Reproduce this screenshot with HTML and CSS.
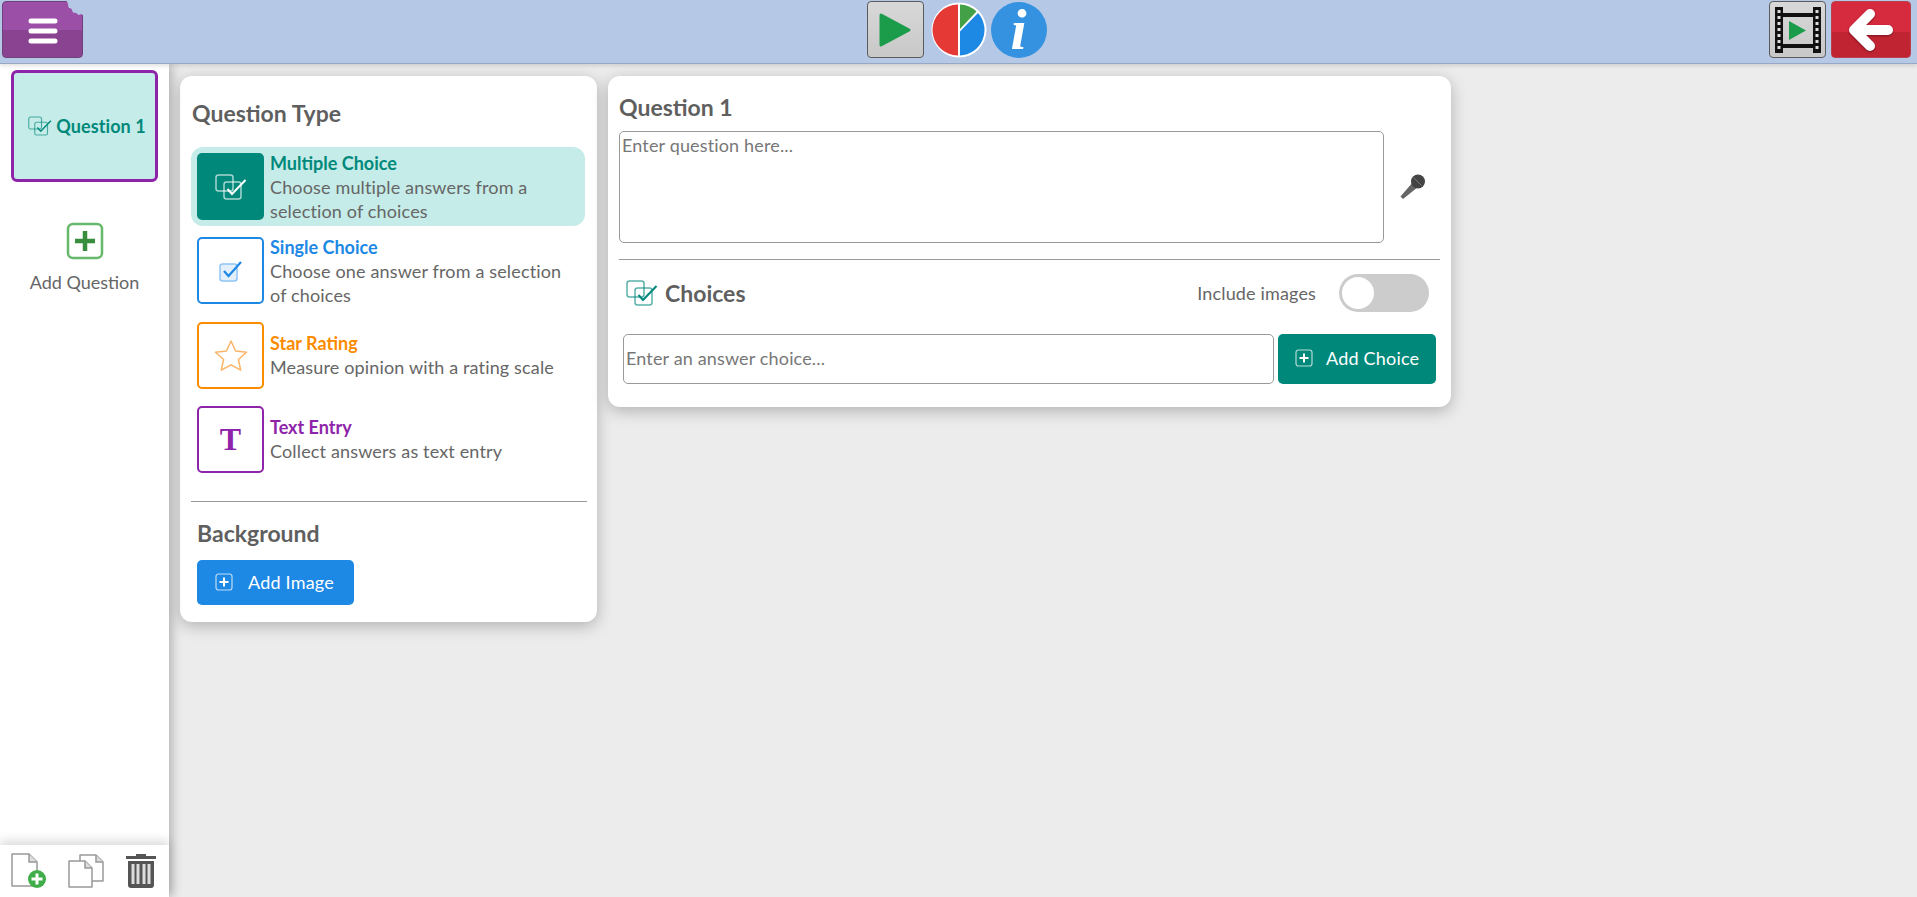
FILE: index.html
```html
<!DOCTYPE html>
<html lang="en">
<head>
    <meta charset="UTF-8">
    <meta name="viewport" content="width=device-width, initial-scale=1.0">
    <title>Question Editor</title>
    <link rel="stylesheet" href="styles.css">
</head>
<body>
    <svg class="defs" width="0" height="0">
        <symbol id="multi" viewBox="0 0 32 26">
            <rect x="1" y="1" width="17" height="16" rx="2.5" fill="none" stroke="currentColor" stroke-width="1.5" opacity=".65"/>
            <rect x="9" y="8" width="17" height="17" rx="2.5" fill="none" stroke="currentColor" stroke-width="1.5" opacity=".65"/>
            <path d="M12.5 15l4.500 5L30.500 6" fill="none" stroke="currentColor" stroke-width="2"/>
        </symbol>
        <symbol id="plus-box" viewBox="0 0 18 18">
            <rect x="1" y="1" width="16" height="16" rx="2.5" fill="none" stroke="#fff" stroke-width="1.2" opacity=".7"/>
            <path d="M9 4.500v9M4.500 9h9" stroke="#fff" stroke-width="2"/>
        </symbol>
    </svg>

    <header class="topbar">
        <button class="tool menu-btn">
            <span class="bite"></span>
            <svg class="menu-bars" width="30" height="26" viewBox="0 0 30 26"><path d="M3 3h24M3 13h24M3 23h24" stroke="#fff" stroke-width="5" stroke-linecap="round"/></svg>
        </button>
        <div class="tools-center">
            <button class="tool gray-btn">
                <svg width="34" height="36" viewBox="0 0 34 36"><path d="M3 3l28 15L3 33z" fill="#1a9c4b" stroke="#1a9c4b" stroke-width="3" stroke-linejoin="round"/></svg>
            </button>
            <svg class="pie" width="56" height="56" viewBox="-28 -28 56 56">
                <circle r="27.5" fill="#fff"/>
                <path d="M-1 -25.5A25.5 25.5 0 0 0 -1 25.5z" fill="#e53935"/>
                <path d="M1 -25.5A25.5 25.5 0 0 1 17.5 -18.5L1 -1z" fill="#43a047"/>
                <path d="M19 -17A25.5 25.5 0 0 1 1 25.5V1.500z" fill="#1e88e5"/>
            </svg>
            <div class="info"><span>i</span></div>
        </div>
        <div class="tools-right">
            <button class="tool gray-btn">
                <svg width="46" height="46" viewBox="0 0 46 46">
                    <path d="M0 0h8v46H0zM38 0h8v46H38z" fill="#111"/>
                    <path d="M8 6h30v4H8zM8 37h30v4H8z" fill="#111"/>
                    <path d="M2.500 3h3v3h-3zM2.500 9h3v3h-3zM2.500 15h3v3h-3zM2.500 21h3v3h-3zM2.500 27h3v3h-3zM2.500 33h3v3h-3zM2.500 39h3v3h-3zM40.500 3h3v3h-3zM40.500 9h3v3h-3zM40.500 15h3v3h-3zM40.500 21h3v3h-3zM40.500 27h3v3h-3zM40.500 33h3v3h-3zM40.500 39h3v3h-3z" fill="#ddd"/>
                    <path d="M14 14l17 9.500L14 33z" fill="#1a9c4b"/>
                </svg>
            </button>
            <button class="tool back-btn">
                <svg class="back-arrow" width="46" height="46" viewBox="0 0 46 46"><path d="M22 7L6 23l16 16M8 23h32" fill="none" stroke="#fff" stroke-width="10" stroke-linecap="round" stroke-linejoin="round"/></svg>
            </button>
        </div>
    </header>

    <div class="layout">
        <aside class="sidebar">
            <div class="question-list">
                <div class="question-card">
                    <svg class="q-icon"><use href="#multi"/></svg>
                    <span>Question 1</span>
                </div>
                <div class="add-question">
                    <svg width="38" height="38" viewBox="0 0 38 38">
                        <rect x="2" y="2" width="34" height="34" rx="5" fill="none" stroke="#66b96a" stroke-width="2.5"/>
                        <path d="M19 9v20M9 19h20" stroke="#388e3c" stroke-width="4.5"/>
                    </svg>
                    <span>Add Question</span>
                </div>
            </div>
            <div class="side-actions">
                <svg width="36" height="36" viewBox="0 0 36 36">
                    <path d="M2 1h17l8 8v24H2z" fill="#fff" stroke="#999" stroke-width="1.5" stroke-linejoin="round"/>
                    <path d="M19 1v8h8" fill="#ddd" stroke="#999" stroke-width="1.5"/>
                    <circle cx="27" cy="26" r="9" fill="#3fae49"/>
                    <path d="M27 20.500v11M21.500 26h11" stroke="#fff" stroke-width="3"/>
                </svg>
                <svg width="36" height="34" viewBox="0 0 36 34">
                    <path d="M12 1h16l7 7v19H12z" fill="#fff" stroke="#999" stroke-width="1.500" stroke-linejoin="round"/>
                    <path d="M28 1v7h7" fill="#ddd" stroke="#999" stroke-width="1.500"/>
                    <path d="M1 7h16l7 7v19H1z" fill="#fff" stroke="#999" stroke-width="1.500" stroke-linejoin="round"/>
                    <path d="M17 7v7h7" fill="#ddd" stroke="#999" stroke-width="1.500"/>
                </svg>
                <svg width="32" height="36" viewBox="0 0 32 36">
                    <path d="M11 3V1h10v2h10v3H1V3z" fill="#555"/>
                    <path d="M3 8h26v24a3 3 0 0 1-3 3H6a3 3 0 0 1-3-3z" fill="#555"/>
                    <path d="M8 11v20M13 11v20M19 11v20M24 11v20" stroke="#ddd" stroke-width="3"/>
                </svg>
            </div>
        </aside>

        <main class="main">
            <section class="panel type-panel">
                <h2 class="type-title">Question Type</h2>
                <div class="type-item teal selected">
                    <div class="type-icon"><svg width="32" height="26"><use href="#multi"/></svg></div>
                    <div class="type-text"><b>Multiple Choice</b>Choose multiple answers from a selection of choices</div>
                </div>
                <div class="type-item blue">
                    <div class="type-icon">
                        <svg width="24" height="22" viewBox="0 0 24 22">
                            <rect x="1" y="4" width="17" height="17" rx="2.500" fill="#e3f0fc" stroke="#90c4f3" stroke-width="1.500"/>
                            <path d="M5 11l4.500 5L22 2" fill="none" stroke="#1e88e5" stroke-width="2.200"/>
                        </svg>
                    </div>
                    <div class="type-text"><b>Single Choice</b>Choose one answer from a selection of choices</div>
                </div>
                <div class="type-item orange">
                    <div class="type-icon">
                        <svg width="34" height="32" viewBox="0 0 34 32"><path d="M17 2l4.600 10 10.900 1.200-8.100 7.300 2.300 10.700L17 25.800 7.300 31.200l2.300-10.700L1.500 13.200 12.400 12z" fill="none" stroke="#fbb468" stroke-width="1.500" stroke-linejoin="round"/></svg>
                    </div>
                    <div class="type-text"><b>Star Rating</b>Measure opinion with a rating scale</div>
                </div>
                <div class="type-item purple">
                    <div class="type-icon"><span class="t-glyph">T</span></div>
                    <div class="type-text"><b>Text Entry</b>Collect answers as text entry</div>
                </div>
                <hr class="rule rule-type">
                <h2 class="bg-title">Background</h2>
                <button class="btn btn-blue">
                    <svg width="18" height="18"><use href="#plus-box"/></svg>
                    Add Image
                </button>
            </section>

            <section class="panel editor-panel">
                <h2 class="editor-title">Question 1</h2>
                <div class="question-row">
                    <textarea class="question-input" placeholder="Enter question here..."></textarea>
                    <svg class="mic" width="26" height="26" viewBox="0 0 26 26">
                        <path d="M13 8L.5 22.500 3 25 18 13z" fill="#666"/>
                        <circle cx="18" cy="7.500" r="7" fill="#444"/>
                        <path d="M13.500 3.500l8 8" stroke="#777" stroke-width="1"/>
                    </svg>
                </div>
                <hr class="rule rule-editor">
                <div class="choices-head">
                    <svg class="choices-icon" width="32" height="26"><use href="#multi"/></svg>
                    <h2 class="choices-title">Choices</h2>
                    <span class="include">Include images</span>
                    <div class="toggle"><div class="knob"></div></div>
                </div>
                <div class="choice-row">
                    <input class="choice-input" type="text" placeholder="Enter an answer choice...">
                    <button class="btn btn-teal">
                        <svg width="18" height="18"><use href="#plus-box"/></svg>
                        Add Choice
                    </button>
                </div>
            </section>
        </main>
    </div>
</body>
</html>
```

FILE: styles.css
```css
* {
    box-sizing: border-box;
}
html, body {
    height: 100%;
}
body {
    margin: 0;
    font-family: Lato, "Noto Sans", sans-serif;
    font-size: 18px;
    color: #5f5f5f;
    background-color: #ececec;
    overflow: hidden;
    display: flex;
    flex-direction: column;
}
.defs {
    position: absolute;
}
button {
    font-family: inherit;
    padding: 0;
    cursor: pointer;
}

/* top bar */
.topbar {
    height: 64px;
    flex: none;
    background-color: #b5c8e6;
    border-bottom: 1px solid #97a8c4;
    box-shadow: 0 2px 4px rgba(0, 0, 0, 0.12);
    display: grid;
    grid-template-columns: 1fr auto 1fr;
    align-items: start;
    padding: 1px 6px 0 2px;
    position: relative;
    z-index: 3;
}
.tool {
    height: 57px;
    border-radius: 4px;
    display: flex;
    align-items: center;
    justify-content: center;
}
.menu-btn {
    width: 81px;
    position: relative;
    justify-self: start;
    background: linear-gradient(#9b4fa7 0 50%, #8a4391 50% 100%);
    border: 1px solid #70407a;
}
.menu-bars {
    margin-top: 2px;
}
.bite {
    position: absolute;
    top: -2px;
    right: -2px;
    width: 18px;
    height: 16px;
    background-color: #b5c8e6;
    clip-path: polygon(0 0, 100% 0, 100% 100%, 85% 88%, 70% 94%, 55% 80%, 40% 80%, 30% 55%, 15% 48%, 10% 20%);
}
.tools-center {
    display: flex;
    align-items: center;
    gap: 4px;
    height: 57px;
}
.tools-right {
    display: flex;
    justify-content: flex-end;
    gap: 5px;
}
.gray-btn {
    width: 57px;
    background: linear-gradient(#d8d8d8, #c8c8c8);
    border: 1px solid #5c5c5c;
}
.tools-center .gray-btn {
    margin-right: 3px;
}
.back-btn {
    width: 80px;
    background: linear-gradient(#d62a3e 0 55%, #c02432 55% 100%);
    border: 1px solid #b9404c;
}
.back-arrow {
    filter: drop-shadow(0 1px 1px rgba(0, 0, 0, 0.4));
}
.info {
    width: 56px;
    height: 56px;
    border-radius: 50%;
    background-color: #3492e0;
    color: #fff;
    display: flex;
    align-items: center;
    justify-content: center;
    font-family: "Liberation Serif", serif;
    font-style: italic;
    font-weight: bold;
    font-size: 58px;
    line-height: 1;
}

/* layout */
.layout {
    flex: 1;
    display: flex;
    min-height: 0;
}
.sidebar {
    width: 169px;
    flex: none;
    background-color: #fff;
    box-shadow: 3px 0 10px rgba(0, 0, 0, 0.25);
    display: flex;
    flex-direction: column;
    position: relative;
    z-index: 2;
}
.question-list {
    flex: 1;
    padding: 6px 11px 0;
}
.question-card {
    height: 112px;
    background-color: #c5ece8;
    border: 3px solid #8e24aa;
    border-radius: 6px;
    display: flex;
    align-items: center;
    justify-content: center;
    gap: 4px;
    color: #00897b;
    font-weight: bold;
    font-size: 18px;
    padding-left: 5px;
    letter-spacing: 0.1px;
}
.q-icon {
    width: 24px;
    height: 20px;
    color: #00897b;
}
.add-question {
    margin-top: 40px;
    display: flex;
    flex-direction: column;
    align-items: center;
    gap: 11px;
    color: #666;
}
.side-actions {
    height: 52px;
    flex: none;
    display: flex;
    align-items: center;
    justify-content: space-between;
    padding: 0 12px 0 10px;
    box-shadow: 0 -4px 10px rgba(0, 0, 0, 0.15);
}

/* panels */
.main {
    flex: 1;
    display: flex;
    align-items: flex-start;
    gap: 11px;
    padding: 12px 11px;
}
.panel {
    background-color: #fff;
    border-radius: 12px;
    box-shadow: 0 4px 16px rgba(0, 0, 0, 0.25);
}
h2 {
    margin: 0;
    font-size: 23px;
    font-weight: bold;
    color: #5f5f5f;
    line-height: 26px;
}
.type-panel {
    width: 417px;
    height: 546px;
    padding: 24px 10px 0 11px;
}
.type-title {
    margin-left: 1px;
    margin-bottom: 21px;
}
.type-item {
    height: 79px;
    width: 394px;
    border-radius: 12px;
    padding: 6px;
    display: flex;
    align-items: center;
    gap: 6px;
    margin-bottom: 5.3px;
    color: #666;
}
.type-item.selected {
    background-color: #c5ece8;
}
.type-icon {
    width: 67px;
    height: 67px;
    flex: none;
    border: 2px solid;
    border-radius: 5px;
    display: flex;
    align-items: center;
    justify-content: center;
}
.type-text {
    line-height: 24px;
    width: 305px;
    letter-spacing: 0.15px;
}
.type-text b {
    display: block;
    letter-spacing: 0;
}
.teal .type-icon {
    background-color: #00897b;
    border-color: #00897b;
    color: #fff;
}
.teal b {
    color: #00897b;
}
.blue .type-icon {
    border-color: #1e88e5;
}
.blue b {
    color: #1e88e5;
}
.orange .type-icon {
    border-color: #fb8c00;
}
.orange b {
    color: #fb8c00;
}
.purple .type-icon {
    border-color: #8e24aa;
}
.purple b {
    color: #8e24aa;
}
.t-glyph {
    font-family: "Liberation Serif", serif;
    font-weight: bold;
    font-size: 32px;
    color: #8e24aa;
    margin-top: 1px;
}
.rule {
    border: none;
    border-top: 1px solid #999;
    margin: 0;
}
.rule-type {
    margin-top: 22px;
    width: 396px;
}
.bg-title {
    margin: 18px 0 14px 6px;
}
.btn {
    border: none;
    border-radius: 5px;
    color: #fff;
    font-size: 18px;
    letter-spacing: 0.2px;
    display: flex;
    align-items: center;
    gap: 15px;
}
.btn-blue {
    margin-left: 6px;
    width: 157px;
    height: 45px;
    padding-left: 18px;
    background-color: #1e88e5;
}
.editor-panel {
    width: 843px;
    height: 331px;
    padding: 18px 11px 0;
}
.editor-title {
    margin-bottom: 11px;
}
.question-row {
    display: flex;
    align-items: center;
    gap: 16px;
}
.question-input {
    width: 765px;
    height: 112px;
    border: 1px solid #999;
    border-radius: 5px;
    padding: 1px 2px;
    resize: none;
    font-family: inherit;
    font-size: 18px;
    letter-spacing: 0.15px;
    line-height: 24px;
}
.mic {
    flex: none;
}
.rule-editor {
    margin-top: 16px;
    width: 821px;
}
.choices-head {
    display: flex;
    align-items: center;
    height: 38px;
    margin-top: 14px;
    padding-left: 7px;
}
.choices-icon {
    color: #00897b;
    margin-right: 7px;
}
.choices-title {
    flex: 1;
}
.include {
    margin-right: 23px;
    color: #666;
    letter-spacing: 0.15px;
}
.toggle {
    width: 90px;
    height: 38px;
    margin-right: 11px;
    border-radius: 19px;
    background-color: #ccc;
    padding: 3px;
}
.knob {
    width: 32px;
    height: 32px;
    border-radius: 50%;
    background-color: #fff;
}
.choice-row {
    display: flex;
    gap: 4px;
    margin-top: 22px;
    padding-left: 4px;
}
.choice-input {
    width: 651px;
    height: 50px;
    border: 1px solid #999;
    border-radius: 5px;
    padding: 0 2px 2px;
    font-family: inherit;
    font-size: 18px;
    letter-spacing: 0.15px;
}
.btn-teal {
    width: 158px;
    height: 50px;
    padding: 0 0 2px 17px;
    gap: 13px;
    background-color: #00897b;
}
::placeholder {
    color: #777;
    opacity: 1;
}
```
